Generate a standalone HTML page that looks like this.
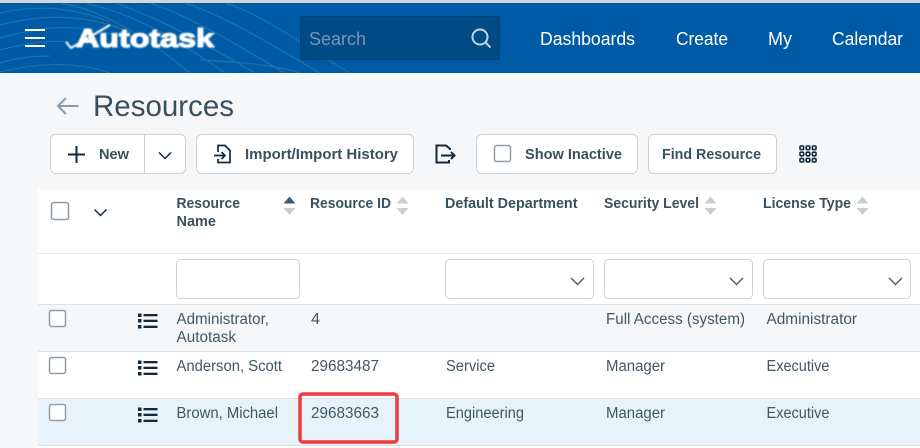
<!DOCTYPE html>
<html><head><meta charset="utf-8"><title>Resources</title>
<style>
html,body{margin:0;padding:0;width:920px;height:448px;overflow:hidden;background:#f5f7f9}
svg{display:block}
text{font-family:"Liberation Sans",Arial,sans-serif}
.b{font-weight:bold;font-size:15.200px;fill:#38515f}
.r{font-size:15.500px;fill:#3f5866}
.n{font-size:18.800px;fill:#fff}
.box{fill:#fff;stroke:#ccd3d8;stroke-width:1}
.chk{fill:#fff;stroke:#8f9ea8;stroke-width:1.5}
.ic{fill:none;stroke:#12293b;stroke-width:2}
</style></head><body>
<svg width="920" height="448" viewBox="0 0 920 448" xmlns="http://www.w3.org/2000/svg">
<rect width="920" height="448" fill="#f5f7f9"/>
<rect width="920" height="3" fill="#d6d6d6"/>
<rect y="3" width="920" height="70" fill="#005ba6"/>
<g fill="none" stroke="#3d87ad" stroke-width="1.200" opacity=".5">
<path d="M0 13C40 4 75 8 110 22"/><path d="M0 25C50 12 90 16 130 32"/><path d="M0 38C45 25 80 24 118 36"/><path d="M0 50C30 42 50 40 70 42"/><path d="M0 63C15 58 30 56 50 56"/><path d="M0 72C40 62 80 62 110 73"/>
<path d="M85 3C140 15 185 45 225 73"/><path d="M115 3C165 20 215 50 255 73"/><path d="M150 3C195 18 245 50 285 73"/><path d="M185 3C230 18 280 50 320 73"/><path d="M225 3C265 15 310 50 350 73"/><path d="M60 3C105 10 150 40 190 73"/><path d="M200 60C240 62 280 66 300 73"/>
</g>
<rect x="25" y="29" width="20" height="2" fill="#fff"/><rect x="25" y="37" width="20" height="2" fill="#fff"/><rect x="25" y="45" width="20" height="2" fill="#fff"/>
<g style="filter:blur(.7px)">
<path d="M66 42L71 48L110 25" fill="none" stroke="#fff" stroke-width="2"/>
<text x="76" y="47" font-size="26" font-weight="bold" fill="#fff" stroke="#fff" stroke-width="1.100" textLength="138" lengthAdjust="spacingAndGlyphs">Autotask</text>
</g>
<rect x="300.500" y="16.500" width="199" height="43" rx="2" fill="#004a86" stroke="#00427a"/>
<text x="309" y="45" font-size="18.800" fill="#7895b2" textLength="57" lengthAdjust="spacingAndGlyphs">Search</text>
<circle cx="480" cy="37" r="7.500" fill="none" stroke="#c5d0da" stroke-width="2"/><path d="M485.500 42.500L490.500 47.500" stroke="#c5d0da" stroke-width="2" fill="none"/>
<text class="n" x="540" y="45" textLength="95" lengthAdjust="spacingAndGlyphs">Dashboards</text>
<text class="n" x="676" y="45" textLength="52" lengthAdjust="spacingAndGlyphs">Create</text>
<text class="n" x="768" y="45" textLength="24" lengthAdjust="spacingAndGlyphs">My</text>
<text class="n" x="832" y="45" textLength="71" lengthAdjust="spacingAndGlyphs">Calendar</text>
<path d="M78.500 106H58M66 98L58 106L66 114" fill="none" stroke="#8d9ba6" stroke-width="2"/>
<text x="93" y="116" font-size="29.500" fill="#37505f" textLength="141" lengthAdjust="spacingAndGlyphs">Resources</text>
<rect class="box" x="50.500" y="134.500" width="135" height="39" rx="5"/>
<path d="M144.500 134.500V173.500" stroke="#ccd3d8"/>
<path d="M68 154.500H85M76.500 146V163" class="ic"/>
<text class="b" x="99" y="159" textLength="30" lengthAdjust="spacingAndGlyphs">New</text>
<path d="M159 152.500L165 158.500L171 152.500" fill="none" stroke="#12293b" stroke-width="1.500"/>
<rect class="box" x="196.500" y="134.500" width="217" height="39" rx="5"/>
<path d="M218 152V145.500H225L230 150.500V162.500H218V159M214 155.500H225M221.500 152L225 155.500L221.500 159" fill="none" stroke="#12293b" stroke-width="1.700"/>
<text class="b" x="245" y="159" textLength="153" lengthAdjust="spacingAndGlyphs">Import/Import History</text>
<path d="M450 150V149L446 145.500H436.500V162.500H449V160M441 155.500H454.500M451 152L454.500 155.500L451 159" class="ic"/>
<rect class="box" x="476.500" y="134.500" width="161" height="39" rx="5"/>
<rect class="chk" x="494.500" y="145.500" width="16" height="16" rx="2"/>
<text class="b" x="525" y="159" textLength="97" lengthAdjust="spacingAndGlyphs">Show Inactive</text>
<rect class="box" x="648.500" y="134.500" width="128" height="39" rx="5"/>
<text class="b" x="662" y="159" textLength="99" lengthAdjust="spacingAndGlyphs">Find Resource</text>
<g fill="none" stroke="#12293b" stroke-width="1.600">
<rect x="800" y="146" width="3.600" height="3.600" rx="1"/><rect x="806.200" y="146" width="3.600" height="3.600" rx="1"/><rect x="812.400" y="146" width="3.600" height="3.600" rx="1"/>
<rect x="800" y="152.200" width="3.600" height="3.600" rx="1"/><rect x="806.200" y="152.200" width="3.600" height="3.600" rx="1"/><rect x="812.400" y="152.200" width="3.600" height="3.600" rx="1"/>
<rect x="800" y="158.400" width="3.600" height="3.600" rx="1"/><rect x="806.200" y="158.400" width="3.600" height="3.600" rx="1"/><rect x="812.400" y="158.400" width="3.600" height="3.600" rx="1"/>
</g>
<rect x="38" y="189" width="882" height="259" fill="#fff"/>
<rect class="chk" x="51.500" y="202.500" width="17" height="17" rx="2"/>
<path d="M94.500 209.500L100.500 215.500L106.500 209.500" fill="none" stroke="#12293b" stroke-width="1.500"/>
<text class="b" x="176.500" y="208" textLength="63.500" lengthAdjust="spacingAndGlyphs">Resource</text>
<text class="b" x="176.500" y="226" textLength="39.500" lengthAdjust="spacingAndGlyphs">Name</text>
<path d="M283.500 203.500L289.500 196.500L295.500 203.500Z" fill="#3f5a68"/><path d="M283.500 208L289.500 215L295.500 208Z" fill="#c9d0d5"/>
<text class="b" x="310" y="208" textLength="81" lengthAdjust="spacingAndGlyphs">Resource ID</text>
<path d="M396.500 203.500L402.500 196.500L408.500 203.500Z" fill="#c9d0d5"/><path d="M396.500 208L402.500 215L408.500 208Z" fill="#c9d0d5"/>
<text class="b" x="445" y="208" textLength="132.500" lengthAdjust="spacingAndGlyphs">Default Department</text>
<text class="b" x="604" y="208" textLength="95" lengthAdjust="spacingAndGlyphs">Security Level</text>
<path d="M704.500 203.500L710.500 196.500L716.500 203.500Z" fill="#c9d0d5"/><path d="M704.500 208L710.500 215L716.500 208Z" fill="#c9d0d5"/>
<text class="b" x="763" y="208" textLength="88" lengthAdjust="spacingAndGlyphs">License Type</text>
<path d="M856.500 203.500L862.500 196.500L868.500 203.500Z" fill="#c9d0d5"/><path d="M856.500 208L862.500 215L868.500 208Z" fill="#c9d0d5"/>
<rect x="38" y="253" width="882" height="1" fill="#e3e7ea"/>
<rect class="box" x="176.500" y="259.500" width="123" height="39" rx="4"/>
<rect class="box" x="445.500" y="259.500" width="148" height="39" rx="4"/>
<rect class="box" x="604.500" y="259.500" width="148" height="39" rx="4"/>
<rect class="box" x="763.500" y="259.500" width="147" height="39" rx="4"/>
<g fill="none" stroke="#4c6472" stroke-width="1.500">
<path d="M571 278L577.500 284.500L584 278"/><path d="M730 278L736.500 284.500L743 278"/><path d="M889 278L895.500 284.500L902 278"/>
</g>
<rect x="38" y="305" width="882" height="46" fill="#f5f7f9"/>
<rect x="38" y="352" width="882" height="46" fill="#fff"/>
<rect x="38" y="399" width="882" height="46" fill="#e6f3fa"/>
<rect x="38" y="304" width="882" height="1" fill="#dfe3e6"/>
<rect x="38" y="351" width="882" height="1" fill="#dfe3e6"/>
<rect x="38" y="398" width="882" height="1" fill="#dfe3e6"/>
<rect x="38" y="445" width="882" height="1" fill="#dfe3e6"/>
<rect class="chk" x="49.500" y="310.500" width="16" height="16" rx="2"/>
<rect class="chk" x="49.500" y="357.500" width="16" height="16" rx="2"/>
<rect class="chk" x="49.500" y="404.500" width="16" height="16" rx="2"/>
<g fill="#12293b">
<rect x="138" y="313.500" width="3.500" height="3.500"/><rect x="138" y="319" width="3.500" height="3.500"/><rect x="138" y="325" width="3.500" height="3.500"/>
<rect x="143.500" y="314" width="14" height="2.300"/><rect x="143.500" y="319.700" width="14" height="2.300"/><rect x="143.500" y="325.700" width="14" height="2.300"/>
<rect x="138" y="360.500" width="3.500" height="3.500"/><rect x="138" y="366" width="3.500" height="3.500"/><rect x="138" y="372" width="3.500" height="3.500"/>
<rect x="143.500" y="361" width="14" height="2.300"/><rect x="143.500" y="366.700" width="14" height="2.300"/><rect x="143.500" y="372.700" width="14" height="2.300"/>
<rect x="138" y="407.500" width="3.500" height="3.500"/><rect x="138" y="413" width="3.500" height="3.500"/><rect x="138" y="419" width="3.500" height="3.500"/>
<rect x="143.500" y="408" width="14" height="2.300"/><rect x="143.500" y="413.700" width="14" height="2.300"/><rect x="143.500" y="419.700" width="14" height="2.300"/>
</g>
<text class="r" x="176.500" y="324" textLength="92.500" lengthAdjust="spacingAndGlyphs">Administrator,</text>
<text class="r" x="176.500" y="342" textLength="59.500" lengthAdjust="spacingAndGlyphs">Autotask</text>
<text class="r" x="311" y="324" textLength="9" lengthAdjust="spacingAndGlyphs">4</text>
<text class="r" x="606" y="324" textLength="139" lengthAdjust="spacingAndGlyphs">Full Access (system)</text>
<text class="r" x="766.500" y="324" textLength="90.500" lengthAdjust="spacingAndGlyphs">Administrator</text>
<text class="r" x="176.500" y="371" textLength="105.500" lengthAdjust="spacingAndGlyphs">Anderson, Scott</text>
<text class="r" x="311" y="371" textLength="68" lengthAdjust="spacingAndGlyphs">29683487</text>
<text class="r" x="446" y="371" textLength="49" lengthAdjust="spacingAndGlyphs">Service</text>
<text class="r" x="606" y="371" textLength="59" lengthAdjust="spacingAndGlyphs">Manager</text>
<text class="r" x="766.500" y="371" textLength="63" lengthAdjust="spacingAndGlyphs">Executive</text>
<text class="r" x="176.500" y="418" textLength="101.500" lengthAdjust="spacingAndGlyphs">Brown, Michael</text>
<text class="r" x="311" y="418" textLength="68" lengthAdjust="spacingAndGlyphs">29683663</text>
<text class="r" x="446" y="418" textLength="78" lengthAdjust="spacingAndGlyphs">Engineering</text>
<text class="r" x="606" y="418" textLength="59" lengthAdjust="spacingAndGlyphs">Manager</text>
<text class="r" x="766.500" y="418" textLength="63" lengthAdjust="spacingAndGlyphs">Executive</text>
<rect x="300" y="394" width="97" height="48" rx="3" fill="none" stroke="#ef3b3b" stroke-width="3.500"/>
</svg>
</body></html>
